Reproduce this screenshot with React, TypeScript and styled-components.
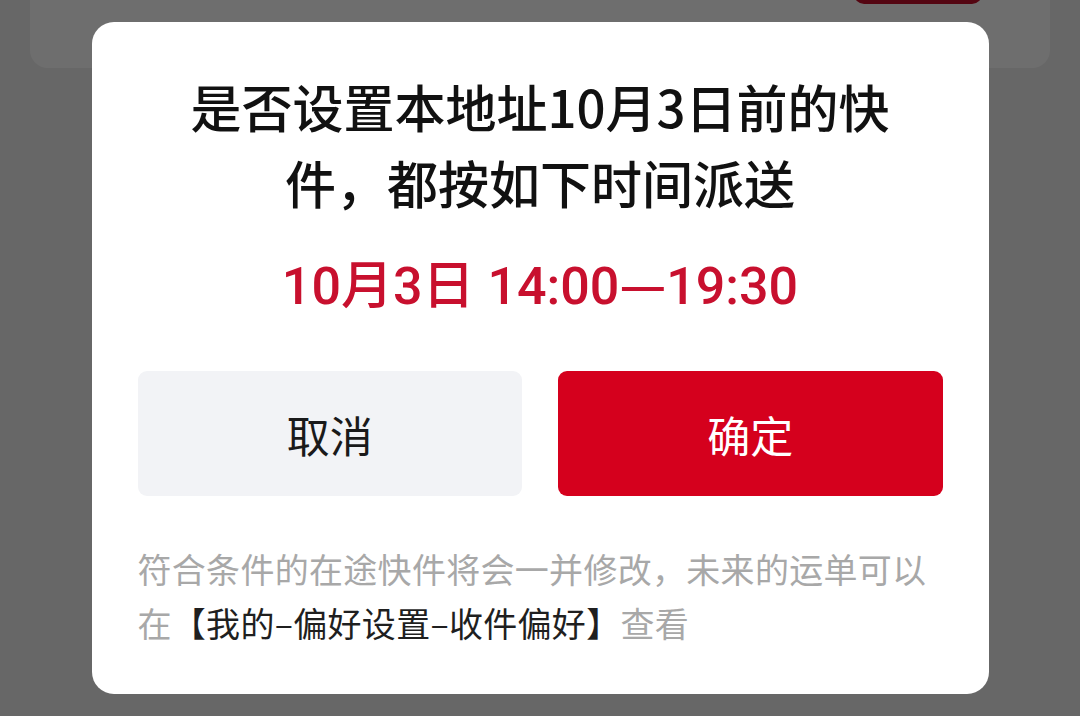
import React from 'react';
import styled, { createGlobalStyle } from 'styled-components';

const GlobalStyle = createGlobalStyle`
  html, body {
    margin: 0;
    padding: 0;
    height: 100%;
    background: #efefef;
    font-family: "Noto Sans CJK SC", "Noto Sans", sans-serif;
  }
  #root {
    height: 100%;
  }
`;

const StyledPage = styled.div`
  width: 100%;
  height: 100%;
  overflow: hidden;

  display: flex;
  flex-direction: column;
  align-items: center;
`;

const StyledOrderCard = styled.div`
  width: 1020px;
  height: 68px;
  overflow: hidden;

  display: flex;
  align-items: flex-start;

  background: #ffffff;
  border-radius: 0 0 18px 18px;
`;

const StyledOrderRow = styled.div`
  width: 100%;
  margin-top: -44px;
  padding: 0 68px 0 290px;
  box-sizing: border-box;

  display: flex;
  align-items: flex-end;
  justify-content: space-between;
`;

const StyledOrderText = styled.span`
  font-size: 34px;
  line-height: 46px;
  color: #333333;
`;

const StyledOrderButton = styled.span`
  width: 128px;
  height: 48px;

  background: #c4102a;
  border-radius: 10px;
`;

const StyledMask = styled.div`
  position: fixed;
  inset: 0;

  display: flex;
  align-items: center;
  justify-content: center;

  background: rgba(0, 0, 0, 0.57);
`;

const StyledDialog = styled.div`
  width: 897px;
  padding: 46px 46px 44px;
  box-sizing: border-box;

  display: flex;
  flex-direction: column;

  background: #ffffff;
  border-radius: 22px;
`;

const StyledTitle = styled.h2`
  max-width: 730px;
  margin: 0 auto;

  font-size: 51px;
  font-weight: 500;
  line-height: 76px;
  text-align: center;
  color: #111111;
`;

const StyledTime = styled.p`
  margin: 30px 0 0;

  font-family: "Roboto", "Noto Sans CJK SC", sans-serif;
  font-size: 52px;
  font-weight: 500;
  line-height: 64px;
  text-align: center;
  color: #c8102e;
`;

const StyledDash = styled.span`
  font-family: "Noto Sans CJK SC", sans-serif;
`;

const StyledActions = styled.div`
  margin-top: 52px;

  display: grid;
  grid-template-columns: 1fr 1fr;
  gap: 36px;
`;

const StyledButton = styled.button<{ $primary?: boolean }>`
  height: 125px;

  display: flex;
  align-items: center;
  justify-content: center;

  font-family: "Noto Sans CJK SC", sans-serif;
  font-size: 43px;
  font-weight: 400;
  color: ${({ $primary }) => ($primary ? '#ffffff' : '#1a1a1a')};
  background: ${({ $primary }) => ($primary ? '#d5001d' : '#f2f3f6')};
  border: none;
  border-radius: 9px;
`;

const StyledNote = styled.p`
  margin: 46px 0 0;

  font-size: 34px;
  line-height: 54px;
  letter-spacing: 0.3px;
  color: #a8a8a8;
`;

const StyledNoteLink = styled.span`
  color: #1f1f1f;
`;

const App: React.FC = () => {
  return (
    <>
      <GlobalStyle />
      <StyledPage>
        <StyledOrderCard>
          <StyledOrderRow>
            <StyledOrderText>预计送达</StyledOrderText>
            <StyledOrderButton />
          </StyledOrderRow>
        </StyledOrderCard>
      </StyledPage>

      <StyledMask>
        <StyledDialog>
          <StyledTitle>是否设置本地址10月3日前的快件，都按如下时间派送</StyledTitle>
          <StyledTime>
            10月3日 14:00<StyledDash>—</StyledDash>19:30
          </StyledTime>

          <StyledActions>
            <StyledButton>取消</StyledButton>
            <StyledButton $primary>确定</StyledButton>
          </StyledActions>

          <StyledNote>
            符合条件的在途快件将会一并修改，未来的运单可以在
            <StyledNoteLink>【我的–偏好设置–收件偏好】</StyledNoteLink>
            查看
          </StyledNote>
        </StyledDialog>
      </StyledMask>
    </>
  );
};

export default App;
